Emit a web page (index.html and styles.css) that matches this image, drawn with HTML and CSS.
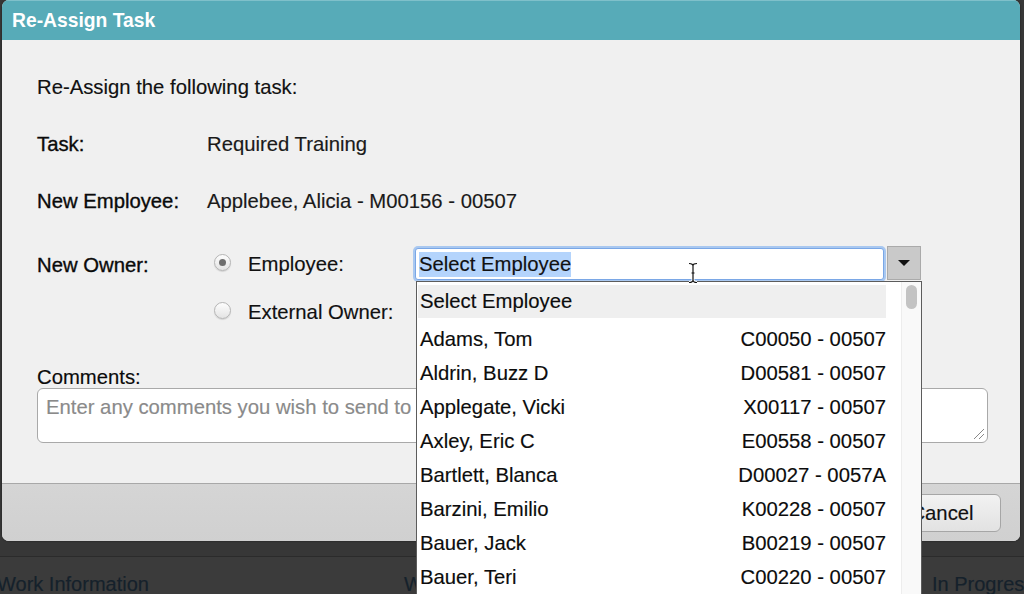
FILE: index.html
```html
<!DOCTYPE html>
<html>
<head>
<meta charset="utf-8">
<link rel="stylesheet" href="styles.css">
</head>
<body>
<div class="page">
  <div class="page-top"></div>
  <div class="page-row">
    <span class="pc pc1">Work Information</span>
    <span class="pc pc2">Work Status</span>
    <span class="pc pc3">In Progress</span>
  </div>
</div>

<div class="dialog">
  <div class="titlebar">Re-Assign Task</div>
  <div class="dbody">
    <div class="intro">Re-Assign the following task:</div>
    <div class="row">
      <div class="lbl">Task:</div>
      <div class="val">Required Training</div>
    </div>
    <div class="row">
      <div class="lbl">New Employee:</div>
      <div class="val">Applebee, Alicia - M00156 - 00507</div>
    </div>
    <div class="owner">
      <div class="lbl">New Owner:</div>
      <div class="opts">
        <div class="opt">
          <span class="radio checked"></span>
          <span class="optlbl">Employee:</span>
          <div class="combo">
            <div class="cinput"><span class="sel">Select Employee</span></div>
            <div class="cbtn"><span class="tri"></span></div>
          </div>
        </div>
        <div class="opt opt2">
          <span class="radio"></span>
          <span class="optlbl">External Owner:</span>
        </div>
      </div>
    </div>
    <div class="clbl">Comments:</div>
    <div class="comments"><span class="ph">Enter any comments you wish to send to the new owner</span><span class="grip"></span></div>
  </div>
  <div class="footer">
    <button class="cancel">Cancel</button>
  </div>
</div>

<div class="dropdown">
  <div class="items">
    <div class="item first"><span>Select Employee</span></div>
    <div class="item"><span>Adams, Tom</span><span>C00050 - 00507</span></div>
    <div class="item"><span>Aldrin, Buzz D</span><span>D00581 - 00507</span></div>
    <div class="item"><span>Applegate, Vicki</span><span>X00117 - 00507</span></div>
    <div class="item"><span>Axley, Eric C</span><span>E00558 - 00507</span></div>
    <div class="item"><span>Bartlett, Blanca</span><span>D00027 - 0057A</span></div>
    <div class="item"><span>Barzini, Emilio</span><span>K00228 - 00507</span></div>
    <div class="item"><span>Bauer, Jack</span><span>B00219 - 00507</span></div>
    <div class="item"><span>Bauer, Teri</span><span>C00220 - 00507</span></div>
  </div>
  <div class="track"><div class="thumb"></div></div>
</div>

<svg class="ibeam" width="12" height="22" viewBox="0 0 12 22">
  <path d="M2 1.5 Q6 1.5 6 4 Q6 1.5 10 1.5 M6 4 V18 M2 20.5 Q6 20.5 6 18 Q6 20.5 10 20.5 M4 11 H8" fill="none" stroke="#fff" stroke-width="3"/>
  <path d="M2 1.5 Q6 1.5 6 4 Q6 1.5 10 1.5 M6 4 V18 M2 20.5 Q6 20.5 6 18 Q6 20.5 10 20.5 M4.5 11 H7.5" fill="none" stroke="#111" stroke-width="1.2"/>
</svg>
</body>
</html>
```
FILE: styles.css
```css
html, body {
  margin: 0;
  padding: 0;
}
body {
  width: 1024px;
  height: 594px;
  overflow: hidden;
  background: #3a3a3a;
  font-family: "Liberation Sans", Arial, Helvetica, sans-serif;
  font-size: 20.3px;
  color: #111;
  position: relative;
  -webkit-text-stroke: 0.15px currentColor;
}
.page-top {
  height: 556px;
  background: #373737;
  border-bottom: 1px solid #2b2b2b;
}
.page-row {
  height: 37px;
  background: #3b3b3b;
  position: relative;
}
.pc {
  color: #15212b;
  font-size: 20px;
  line-height: 22px;
  position: absolute;
  top: 16px;
  white-space: nowrap;
}
.pc1 { left: -3px; }
.pc2 { left: 404px; }
.pc3 { left: 932px; }

.dialog {
  position: absolute;
  left: 2px;
  top: 0;
  width: 1018px;
  height: 541px;
  border-radius: 7px;
  overflow: hidden;
  background: #f0f0f0;
  box-shadow: 0 0 2px rgba(0,0,0,0.6);
}
.titlebar {
  height: 40px;
  background: #57abb8;
  border-top: 1px solid #7fc0ca;
  box-sizing: border-box;
  color: #fff;
  font-weight: bold;
  font-size: 19.3px;
  line-height: 40px;
  padding-left: 10px;
  -webkit-text-stroke: 0;
}
.dbody {
  height: 443px;
  box-sizing: border-box;
  padding: 35px 0 0 35px;
  background: #f0f0f0;
}
.intro {
  line-height: 24px;
}
.row {
  display: flex;
  line-height: 24px;
  margin-top: 33px;
}
.lbl {
  width: 170px;
  flex: none;
  color: #0a0a0a;
  -webkit-text-stroke: 0.35px #0a0a0a;
}
.val {
  color: #1a1a1a;
}
.owner {
  display: flex;
  margin-top: 34px;
  line-height: 24px;
}
.owner .lbl {
  padding-top: 6px;
}
.opts {
  display: flex;
  flex-direction: column;
}
.opt {
  display: flex;
  align-items: center;
  height: 34px;
}
.opt2 {
  margin-top: 19px;
  height: 24px;
}
.radio {
  width: 15px;
  height: 15px;
  border-radius: 50%;
  border: 1px solid #b5b5b5;
  background: linear-gradient(#fdfdfd, #e4e4e4);
  box-shadow: 0 1px 1px rgba(0,0,0,0.12);
  margin-left: 7px;
  margin-right: 17px;
  position: relative;
  flex: none;
  margin-top: -4px;
}
.radio.checked::after {
  content: "";
  position: absolute;
  left: 4px;
  top: 4px;
  width: 7px;
  height: 7px;
  border-radius: 50%;
  background: #6e6e6e;
}
.optlbl {
  width: 166px;
  color: #111;
  white-space: nowrap;
}
.combo {
  display: flex;
  align-items: flex-start;
  height: 34px;
}
.cinput {
  width: 464px;
  height: 30px;
  background: #fff;
  border: 1px solid #7aa7e6;
  box-shadow: 0 0 0 2px #a9c8f0;
  border-radius: 3px;
  display: flex;
  align-items: center;
  padding-left: 3px;
  margin: 1px 0 0 1px;
}
.sel {
  background: #b4d4fc;
  line-height: 25px;
  color: #111;
}
.cbtn {
  width: 34px;
  height: 34px;
  background: #c9c9c9;
  border: 1px solid #aaa;
  box-sizing: border-box;
  margin-left: 3px;
  margin-top: -1px;
  display: flex;
  align-items: center;
  justify-content: center;
}
.tri {
  width: 0;
  height: 0;
  border-left: 6px solid transparent;
  border-right: 6px solid transparent;
  border-top: 6px solid #111;
}
.clbl {
  margin-top: 42px;
  line-height: 22px;
  color: #0a0a0a;
}
.comments {
  width: 951px;
  height: 55px;
  box-sizing: border-box;
  background: #fff;
  border: 1px solid #a9a9a9;
  border-radius: 6px;
  padding: 6px 8px;
  line-height: 24px;
  position: relative;
  white-space: nowrap;
  overflow: hidden;
}
.ph {
  color: #8a8a8a;
}
.grip {
  position: absolute;
  right: 3px;
  bottom: 3px;
  width: 10px;
  height: 10px;
  background: linear-gradient(135deg, transparent 45%, #888 45%, #888 52%, transparent 52%, transparent 70%, #888 70%, #888 77%, transparent 77%);
}
.footer {
  height: 58px;
  box-sizing: border-box;
  border-top: 1px solid #a8a8a8;
  background: linear-gradient(#d5d5d5, #d0d0d0);
  display: flex;
  justify-content: flex-end;
  align-items: flex-start;
  padding: 10px 19px 0 0;
}
.cancel {
  font-family: "Liberation Sans", Arial, sans-serif;
  font-size: 20.3px;
  color: #111;
  width: 118px;
  height: 38px;
  border: 1px solid #a6a6a6;
  border-radius: 6px;
  background: linear-gradient(#f2f2f2, #e2e2e2);
  padding: 0;
  -webkit-text-stroke: 0.15px #111;
}

.dropdown {
  position: absolute;
  left: 416px;
  top: 281px;
  width: 506px;
  height: 330px;
  box-sizing: border-box;
  background: #fff;
  border: 1px solid #5c5c5c;
  display: flex;
}
.items {
  width: 469px;
  padding-top: 3px;
  flex: none;
}
.item {
  height: 34px;
  display: flex;
  justify-content: space-between;
  align-items: center;
  padding-left: 3px;
  color: #0c0c0c;
  white-space: nowrap;
}
.item.first {
  height: 33px;
  background: #efefef;
  margin-bottom: 4px;
  margin-left: 1px;
  padding-left: 2px;
}
.track {
  margin-left: 15px;
  width: 20px;
  background: #f9f9f9;
  border-left: 1px solid #ededed;
  position: relative;
}
.thumb {
  position: absolute;
  left: 4px;
  top: 3px;
  width: 11px;
  height: 24px;
  border-radius: 6px;
  background: #c3c3c3;
}
.ibeam {
  position: absolute;
  left: 687px;
  top: 262px;
}
```
